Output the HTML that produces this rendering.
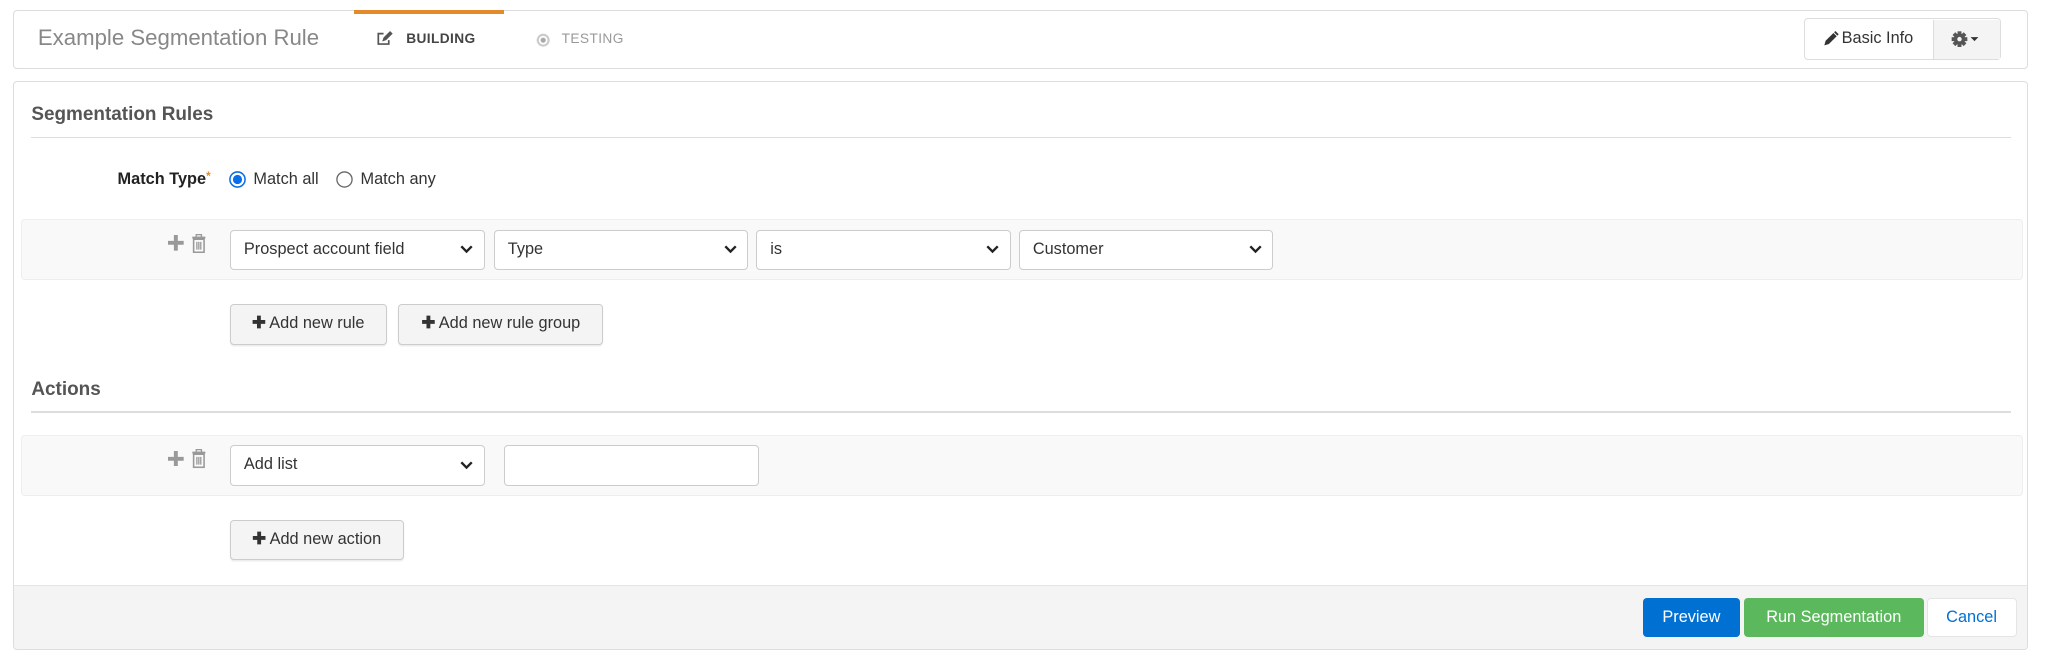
<!DOCTYPE html>
<html><head><meta charset="utf-8"><style>
html,body{margin:0;padding:0;background:#fff;overflow:hidden}
body{width:2048px;height:666px}
#w{zoom:1.30612;width:1568px;height:510px;position:relative;font-family:"Liberation Sans",sans-serif;color:#333;font-size:12.5px}
.a{position:absolute;box-sizing:border-box}
.box{border:1px solid #ddd;border-radius:3px;background:#fff}
.sel{background:#fff;border:1px solid #ccc;border-radius:3px;height:31px;line-height:29px;padding-left:10px;font-size:12.5px;color:#333}
.sel svg{position:absolute;right:8px;top:11px}
.btn{background:#f4f4f4;border:1px solid #ccc;border-radius:3px;height:31px;line-height:29px;text-align:center;font-size:12.5px;color:#333;box-shadow:0 1px 1px rgba(0,0,0,.08)}
.hd{font-weight:bold;font-size:14.5px;color:#555}
.hr{height:1px;background:#ddd}
.fb{height:30px;line-height:30px;text-align:center;border-radius:3px;color:#fff;font-size:12.5px}
</style></head><body><div id="w">
<div class="a box" style="left:10px;top:8px;width:1543px;height:45px"></div>
<div class="a" style="left:271px;top:8px;width:115px;height:3px;background:#e38b2a"></div>
<div class="a" style="left:29px;top:19px;font-size:17px;color:#888">Example Segmentation Rule</div>
<svg class="a" style="left:289px;top:24px" width="12" height="12" viewBox="0 0 12 12"><path d="M9 7v3H1V2h4" fill="none" stroke="#555" stroke-width="1.3"/><path d="M4 8l1-3 5-5 2 2-5 5z" fill="#555"/></svg>
<div class="a" style="left:311px;top:24px;font-size:10.5px;font-weight:bold;color:#444;letter-spacing:.3px">BUILDING</div>
<svg class="a" style="left:410px;top:25px" width="11" height="11" viewBox="0 0 11 11"><circle cx="5.5" cy="5.5" r="5" fill="#ccc"/><circle cx="5.5" cy="5.5" r="3.3" fill="#fff"/><circle cx="5.5" cy="5.5" r="2" fill="#aaa"/></svg>
<div class="a" style="left:430px;top:24px;font-size:10.5px;color:#999;letter-spacing:.3px">TESTING</div>
<div class="a" style="left:1381px;top:14px;width:151px;height:32px;border:1px solid #ddd;border-radius:3px;background:#fff"></div>
<div class="a" style="left:1480px;top:15px;width:51px;height:30px;background:#f4f4f4;border-left:1px solid #ddd"></div>
<svg class="a" style="left:1396px;top:24px" width="12" height="12" viewBox="0 0 12 12"><path d="M1 11l1-3.5 6-6 2.5 2.5-6 6z" fill="#333"/><path d="M8.5 1l1-1 2.5 2.5-1 1z" fill="#333"/></svg>
<div class="a" style="left:1410px;top:22px">Basic Info</div>
<svg class="a" style="left:1494px;top:23px" width="24" height="14" viewBox="0 0 24 14"><g fill="#555" transform="translate(6.5 7)"><circle r="4.3"/><rect x="-1.5" y="-6" width="3" height="12"/><rect x="-6" y="-1.5" width="12" height="3"/><rect x="-1.5" y="-6" width="3" height="12" transform="rotate(45)"/><rect x="-1.5" y="-6" width="3" height="12" transform="rotate(-45)"/></g><circle cx="6.5" cy="7" r="1.7" fill="#f4f4f4"/><path d="M15 5.5h6l-3 3z" fill="#333"/></svg>

<div class="a box" style="left:10px;top:62px;width:1543px;height:436px;overflow:hidden">
<div class="a" style="left:0;top:385px;width:1543px;height:52px;background:#f4f4f4;border-top:1px solid #e5e5e5"></div>
</div>
<div class="a hd" style="left:24px;top:80px">Segmentation Rules</div>
<div class="a hr" style="left:24px;top:105px;width:1516px"></div>
<div class="a" style="left:90px;top:130px;font-weight:bold;color:#222">Match Type<span style="color:#e38b2a;font-size:9px;vertical-align:top">*</span></div>
<svg class="a" style="left:175px;top:131px" width="13" height="13"><circle cx="6.5" cy="6.5" r="5.8" fill="#fff" stroke="#0a6ee8" stroke-width="1.2"/><circle cx="6.5" cy="6.5" r="3.5" fill="#0a6ee8"/></svg>
<div class="a" style="left:194px;top:130px">Match all</div>
<svg class="a" style="left:257px;top:131px" width="13" height="13"><circle cx="6.5" cy="6.5" r="5.8" fill="#fff" stroke="#666" stroke-width="1"/></svg>
<div class="a" style="left:276px;top:130px">Match any</div>

<div class="a" style="left:16px;top:168px;width:1533px;height:46px;background:#f9f9f9;border:1px solid #eee;border-radius:3px"></div>
<svg class="a" style="left:129px;top:180px" width="12" height="12"><path d="M4.5 0h3v4.5H12v3H7.5V12h-3V7.5H0v-3h4.5z" fill="#999"/></svg>
<svg class="a" style="left:146px;top:179px" width="12" height="15" viewBox="0 0 12 15"><rect x="1" y="2" width="10" height="1.5" fill="#999"/><rect x="4" y="0.5" width="4" height="2" fill="none" stroke="#999"/><rect x="2" y="4" width="8" height="10" fill="none" stroke="#999" stroke-width="1.2"/><path d="M4.5 6v6M6 6v6M7.5 6v6" stroke="#999"/></svg>
<div class="a sel" style="left:176px;top:176px;width:195px">Prospect account field<svg width="10" height="7"><path d="M1 1l4 4 4-4" fill="none" stroke="#222" stroke-width="1.8"/></svg></div>
<div class="a sel" style="left:378px;top:176px;width:195px">Type<svg width="10" height="7"><path d="M1 1l4 4 4-4" fill="none" stroke="#222" stroke-width="1.8"/></svg></div>
<div class="a sel" style="left:579px;top:176px;width:195px">is<svg width="10" height="7"><path d="M1 1l4 4 4-4" fill="none" stroke="#222" stroke-width="1.8"/></svg></div>
<div class="a sel" style="left:780px;top:176px;width:195px">Customer<svg width="10" height="7"><path d="M1 1l4 4 4-4" fill="none" stroke="#222" stroke-width="1.8"/></svg></div>
<div class="a btn" style="left:176px;top:233px;width:120px"><b>✚</b> Add new rule</div>
<div class="a btn" style="left:305px;top:233px;width:157px"><b>✚</b> Add new rule group</div>

<div class="a hd" style="left:24px;top:290px">Actions</div>
<div class="a hr" style="left:24px;top:315px;width:1516px"></div>
<div class="a" style="left:16px;top:333px;width:1533px;height:47px;background:#f9f9f9;border:1px solid #eee;border-radius:3px"></div>
<svg class="a" style="left:129px;top:345px" width="12" height="12"><path d="M4.5 0h3v4.5H12v3H7.5V12h-3V7.5H0v-3h4.5z" fill="#999"/></svg>
<svg class="a" style="left:146px;top:344px" width="12" height="15" viewBox="0 0 12 15"><rect x="1" y="2" width="10" height="1.5" fill="#999"/><rect x="4" y="0.5" width="4" height="2" fill="none" stroke="#999"/><rect x="2" y="4" width="8" height="10" fill="none" stroke="#999" stroke-width="1.2"/><path d="M4.5 6v6M6 6v6M7.5 6v6" stroke="#999"/></svg>
<div class="a sel" style="left:176px;top:341px;width:195px">Add list<svg width="10" height="7"><path d="M1 1l4 4 4-4" fill="none" stroke="#222" stroke-width="1.8"/></svg></div>
<div class="a sel" style="left:386px;top:341px;width:195px"></div>
<div class="a btn" style="left:176px;top:398px;width:133px"><b>✚</b> Add new action</div>

<div class="a fb" style="left:1258px;top:458px;width:74px;background:#0070d2">Preview</div>
<div class="a fb" style="left:1335px;top:458px;width:138px;background:#5cb85c">Run Segmentation</div>
<div class="a fb" style="left:1475px;top:458px;width:69px;background:#fff;color:#0070d2;border:1px solid #e5e5e5;line-height:28px">Cancel</div>
</div></body></html>
